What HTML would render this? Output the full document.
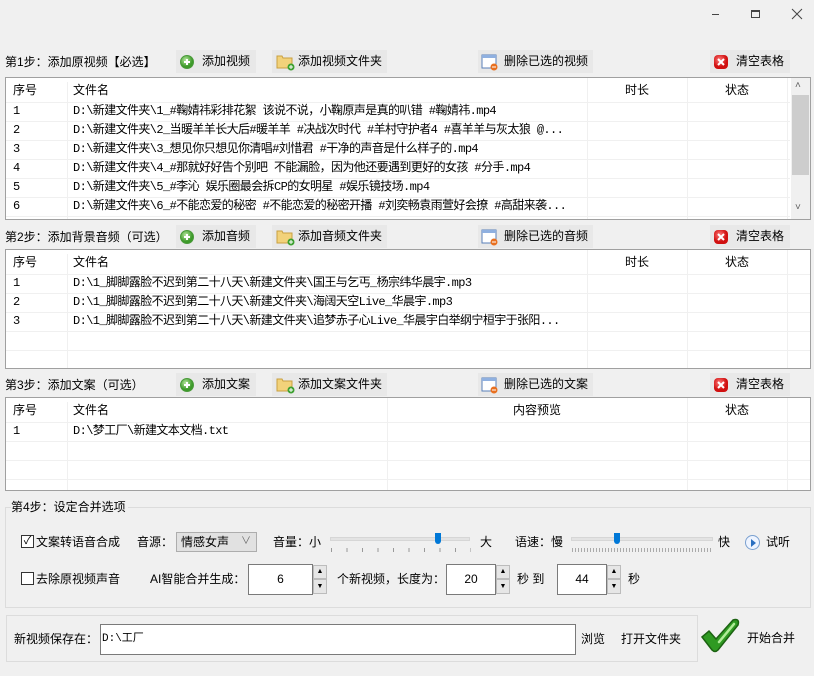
<!DOCTYPE html>
<html><head><meta charset="utf-8"><style>
*{box-sizing:border-box;margin:0;padding:0}
body{width:814px;height:676px;background:#f0f0f0;position:relative;overflow:hidden;font-family:"Liberation Sans","Noto Sans CJK SC",sans-serif;font-size:12px;color:#000}
.a{position:absolute;white-space:nowrap}
.lbl{font-size:12px;line-height:14px}
.btn{position:absolute;background:#e8e8e8;height:23px;line-height:23px;font-size:12px;padding-left:26px}
.tbl{position:absolute;background:#fff;border:1px solid #a0a0a0;overflow:hidden}
.hd{position:absolute;top:0;height:25px;line-height:25px;font-size:12px}
.vl{position:absolute;top:0;bottom:0;width:1px;background:#f0f0f0}
.hl{position:absolute;left:0;right:0;height:1px;background:#f0f0f0}
.cell{position:absolute;font-family:"Liberation Mono","Noto Sans CJK SC",monospace;font-size:12px;line-height:19px;overflow:hidden;white-space:nowrap;letter-spacing:-0.6px}
.spin{position:absolute;background:#fff;border:1px solid #7a7a7a;text-align:center;line-height:28px;font-size:12px}
.arr{position:absolute;width:14px;border:1px solid #bcbcbc;background:#e6e6e6;font-size:7px;text-align:center}
</style></head><body>

<!-- title buttons -->
<div class="a" style="left:712px;top:14px;width:7px;height:1px;background:#444"></div>
<div class="a" style="left:751px;top:10px;width:9px;height:8px;border:1px solid #444;border-top-width:2px"></div>
<svg class="a" style="left:791px;top:8px" width="12" height="12"><path d="M1 1L11 11M11 1L1 11" stroke="#444" stroke-width="1"/></svg>

<!-- step 1 -->
<div class="a lbl" style="left:5px;top:55px">第1步：添加原视频【必选】</div>
<div class="btn" style="left:176px;top:50px;width:80px">添加视频</div>
<div class="btn" style="left:272px;top:50px;width:115px">添加视频文件夹</div>
<div class="btn" style="left:478px;top:50px;width:115px">删除已选的视频</div>
<div class="btn" style="left:710px;top:50px;width:80px">清空表格</div>

<!-- step 2 -->
<div class="a lbl" style="left:5px;top:230px">第2步：添加背景音频（可选）</div>
<div class="btn" style="left:176px;top:225px;width:80px">添加音频</div>
<div class="btn" style="left:272px;top:225px;width:115px">添加音频文件夹</div>
<div class="btn" style="left:478px;top:225px;width:115px">删除已选的音频</div>
<div class="btn" style="left:710px;top:225px;width:80px">清空表格</div>

<!-- step 3 -->
<div class="a lbl" style="left:5px;top:378px">第3步：添加文案（可选）</div>
<div class="btn" style="left:176px;top:373px;width:80px">添加文案</div>
<div class="btn" style="left:272px;top:373px;width:115px">添加文案文件夹</div>
<div class="btn" style="left:478px;top:373px;width:115px">删除已选的文案</div>
<div class="btn" style="left:710px;top:373px;width:80px">清空表格</div>

<!-- icons -->
<svg class="a" style="left:0;top:0" width="814" height="400">
<defs>
<radialGradient id="g" cx="40%" cy="35%"><stop offset="0" stop-color="#b8e8a0"/><stop offset="1" stop-color="#3d9a2a"/></radialGradient>
<radialGradient id="r" cx="40%" cy="35%"><stop offset="0" stop-color="#ff7a7a"/><stop offset="1" stop-color="#d01010"/></radialGradient>
</defs>
<g id="i1">
<circle cx="187" cy="62" r="6.5" fill="url(#g)" stroke="#4a9a3a"/>
<path d="M184 62h6M187 59v6" stroke="#fff" stroke-width="2"/>
<path d="M277 56h5l1 2h9v10h-15z" fill="#f2d27a" stroke="#c9a040"/>
<circle cx="291" cy="67" r="3.5" fill="#3da030"/><path d="M289 67h4M291 65v4" stroke="#fff"/>
<rect x="482" y="55" width="14" height="13" fill="#fff" stroke="#5a7fb8"/><rect x="482" y="55" width="14" height="3" fill="#8fb0e0"/>
<circle cx="494" cy="67" r="3.5" fill="#e87020"/><path d="M492 67h4" stroke="#fff"/>
<rect x="714" y="55" width="14" height="14" rx="4" fill="url(#r)"/><path d="M718 59l6 6M724 59l-6 6" stroke="#fff" stroke-width="2"/>
</g>
<use href="#i1" y="175"/>
<use href="#i1" y="323"/>
</svg>

<!-- table 1 -->
<div class="tbl" style="left:5px;top:77px;width:806px;height:143px">
<div class="hd" style="left:7px">序号</div>
<div class="hd" style="left:67px">文件名</div>
<div class="hd" style="left:619px">时长</div>
<div class="hd" style="left:719px">状态</div>
<div class="vl" style="left:61px;top:4px"></div><div class="vl" style="left:581px"></div><div class="vl" style="left:681px"></div><div class="vl" style="left:781px"></div>
<div class="hl" style="top:24px;right:20px"></div><div class="hl" style="top:43px;right:20px"></div><div class="hl" style="top:62px;right:20px"></div><div class="hl" style="top:81px;right:20px"></div><div class="hl" style="top:100px;right:20px"></div><div class="hl" style="top:119px;right:20px"></div><div class="hl" style="top:138px;right:20px"></div>
<div class="cell" style="left:7px;top:24px">1</div><div class="cell" style="left:67px;top:24px;width:512px">D:\新建文件夹\1_#鞠婧祎彩排花絮 该说不说，小鞠原声是真的叭错 #鞠婧祎.mp4</div>
<div class="cell" style="left:7px;top:43px">2</div><div class="cell" style="left:67px;top:43px;width:512px">D:\新建文件夹\2_当暖羊羊长大后#暖羊羊 #决战次时代 #羊村守护者4 #喜羊羊与灰太狼 @...</div>
<div class="cell" style="left:7px;top:62px">3</div><div class="cell" style="left:67px;top:62px;width:512px">D:\新建文件夹\3_想见你只想见你清唱#刘惜君 #干净的声音是什么样子的.mp4</div>
<div class="cell" style="left:7px;top:81px">4</div><div class="cell" style="left:67px;top:81px;width:512px">D:\新建文件夹\4_#那就好好告个别吧 不能漏脸，因为他还要遇到更好的女孩  #分手.mp4</div>
<div class="cell" style="left:7px;top:100px">5</div><div class="cell" style="left:67px;top:100px;width:512px">D:\新建文件夹\5_#李沁 娱乐圈最会拆CP的女明星 #娱乐镜技场.mp4</div>
<div class="cell" style="left:7px;top:119px">6</div><div class="cell" style="left:67px;top:119px;width:512px">D:\新建文件夹\6_#不能恋爱的秘密 #不能恋爱的秘密开播 #刘奕畅袁雨萱好会撩 #高甜来袭...</div>
<div class="a" style="left:785px;top:0;width:19px;height:141px;background:#f0f0f0"></div>
<div class="a" style="left:786px;top:17px;width:17px;height:80px;background:#cdcdcd"></div>
<div class="a" style="left:789px;top:2px;font-size:10px;color:#606060">˄</div>
<div class="a" style="left:789px;top:124px;font-size:10px;color:#606060">˅</div>
</div>

<!-- table 2 -->
<div class="tbl" style="left:5px;top:249px;width:806px;height:120px">
<div class="hd" style="left:7px">序号</div>
<div class="hd" style="left:67px">文件名</div>
<div class="hd" style="left:619px">时长</div>
<div class="hd" style="left:719px">状态</div>
<div class="vl" style="left:61px;top:4px"></div><div class="vl" style="left:581px"></div><div class="vl" style="left:681px"></div><div class="vl" style="left:781px"></div>
<div class="hl" style="top:24px"></div><div class="hl" style="top:43px"></div><div class="hl" style="top:62px"></div><div class="hl" style="top:81px"></div><div class="hl" style="top:100px"></div>
<div class="cell" style="left:7px;top:24px">1</div><div class="cell" style="left:67px;top:24px;width:512px">D:\1_脚脚露脸不迟到第二十八天\新建文件夹\国王与乞丐_杨宗纬华晨宇.mp3</div>
<div class="cell" style="left:7px;top:43px">2</div><div class="cell" style="left:67px;top:43px;width:512px">D:\1_脚脚露脸不迟到第二十八天\新建文件夹\海阔天空Live_华晨宇.mp3</div>
<div class="cell" style="left:7px;top:62px">3</div><div class="cell" style="left:67px;top:62px;width:512px">D:\1_脚脚露脸不迟到第二十八天\新建文件夹\追梦赤子心Live_华晨宇白举纲宁桓宇于张阳...</div>
</div>

<!-- table 3 -->
<div class="tbl" style="left:5px;top:397px;width:806px;height:94px">
<div class="hd" style="left:7px">序号</div>
<div class="hd" style="left:67px">文件名</div>
<div class="hd" style="left:507px">内容预览</div>
<div class="hd" style="left:719px">状态</div>
<div class="vl" style="left:61px;top:4px"></div><div class="vl" style="left:381px"></div><div class="vl" style="left:681px"></div><div class="vl" style="left:781px"></div>
<div class="hl" style="top:24px"></div><div class="hl" style="top:43px"></div><div class="hl" style="top:62px"></div><div class="hl" style="top:81px"></div>
<div class="cell" style="left:7px;top:24px">1</div><div class="cell" style="left:67px;top:24px">D:\梦工厂\新建文本文档.txt</div>
</div>

<!-- step 4 group -->
<div class="a" style="left:5px;top:507px;width:806px;height:101px;border:1px solid #dcdcdc"></div>
<div class="a lbl" style="left:11px;top:500px;background:#f0f0f0;padding-right:2px">第4步：设定合并选项</div>

<div class="a" style="left:21px;top:535px;width:13px;height:13px;border:1px solid #333;background:#fff;font-size:11px;line-height:11px;text-align:center">✓</div>
<div class="a lbl" style="left:36px;top:535px">文案转语音合成</div>
<div class="a lbl" style="left:137px;top:535px">音源：</div>
<div class="a" style="left:176px;top:532px;width:81px;height:20px;border:1px solid #adadad;background:#e1e1e1;line-height:18px;padding-left:4px">情感女声<span style="position:absolute;right:5px;color:#666;font-size:10px">∨</span></div>
<div class="a lbl" style="left:273px;top:535px">音量：小</div>
<div class="a" style="left:330px;top:537px;width:140px;height:4px;background:#e3e3e3;border:1px solid #d6d6d6"></div>
<div class="a" style="left:435px;top:533px;width:6px;height:11px;background:#0078d7;border-radius:0 0 3px 3px"></div>
<div class="a" style="left:331px;top:548px;width:140px;height:4px;background:repeating-linear-gradient(90deg,#999 0 1px,transparent 1px 15.5px)"></div>
<div class="a lbl" style="left:480px;top:535px">大</div>
<div class="a lbl" style="left:515px;top:535px">语速：慢</div>
<div class="a" style="left:571px;top:537px;width:142px;height:4px;background:#e3e3e3;border:1px solid #d6d6d6"></div>
<div class="a" style="left:614px;top:533px;width:6px;height:11px;background:#0078d7;border-radius:0 0 3px 3px"></div>
<div class="a" style="left:572px;top:548px;width:141px;height:4px;background:repeating-linear-gradient(90deg,#aaa 0 1px,transparent 1px 3px)"></div>
<div class="a lbl" style="left:718px;top:535px">快</div>
<div class="a" style="left:745px;top:535px;width:15px;height:15px;border-radius:50%;border:1px solid #7aa0d0;background:#eef4ff"></div>
<div class="a" style="left:751px;top:539px;width:0;height:0;border-left:5px solid #2a6fc0;border-top:4px solid transparent;border-bottom:4px solid transparent"></div>
<div class="a lbl" style="left:766px;top:535px">试听</div>

<div class="a" style="left:21px;top:572px;width:13px;height:13px;border:1px solid #333;background:#fff"></div>
<div class="a lbl" style="left:36px;top:572px">去除原视频声音</div>
<div class="a lbl" style="left:150px;top:572px">AI智能合并生成：</div>
<div class="spin" style="left:248px;top:564px;width:65px;height:31px">6</div>
<div class="arr" style="left:313px;top:565px;height:14px;line-height:12px">▲</div><div class="arr" style="left:313px;top:579px;height:15px;line-height:13px">▼</div>
<div class="a lbl" style="left:337px;top:572px">个新视频，长度为：</div>
<div class="spin" style="left:446px;top:564px;width:50px;height:31px">20</div>
<div class="arr" style="left:496px;top:565px;height:14px;line-height:12px">▲</div><div class="arr" style="left:496px;top:579px;height:15px;line-height:13px">▼</div>
<div class="a lbl" style="left:517px;top:572px">秒 到</div>
<div class="spin" style="left:557px;top:564px;width:50px;height:31px">44</div>
<div class="arr" style="left:607px;top:565px;height:14px;line-height:12px">▲</div><div class="arr" style="left:607px;top:579px;height:15px;line-height:13px">▼</div>
<div class="a lbl" style="left:628px;top:572px">秒</div>

<!-- save panel -->
<div class="a" style="left:6px;top:615px;width:692px;height:47px;border:1px solid #dcdcdc"></div>
<div class="a lbl" style="left:14px;top:632px">新视频保存在：</div>
<div class="a" style="left:100px;top:624px;width:476px;height:31px;background:#fff;border:1px solid #7a7a7a;font-family:'Liberation Mono','Noto Sans CJK SC',monospace;font-size:11px;line-height:29px;padding-left:1px">D:\工厂</div>
<div class="a lbl" style="left:581px;top:632px">浏览</div>
<div class="a lbl" style="left:621px;top:632px">打开文件夹</div>
<svg class="a" style="left:700px;top:618px" width="44" height="36"><path d="M2 19 L9 13 L16 21 L33 2 Q40 0 38 7 L18 32 Q15 35 12 32 Z" fill="#2f9a22" stroke="#1c6212" stroke-width="1.5"/><path d="M19 24 L34 6" stroke="#b0ec98" stroke-width="2.5" stroke-linecap="round"/></svg>
<div class="a lbl" style="left:747px;top:631px">开始合并</div>
</body></html>
